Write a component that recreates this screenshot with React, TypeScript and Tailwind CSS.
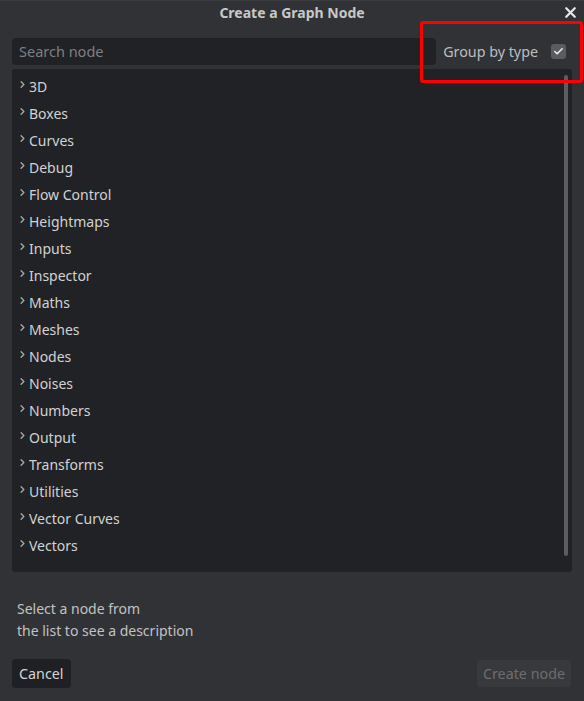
import { Check, ChevronRight, X } from 'lucide-react';

const groups = [
  '3D', 'Boxes', 'Curves', 'Debug', 'Flow Control', 'Heightmaps', 'Inputs', 'Inspector', 'Maths',
  'Meshes', 'Nodes', 'Noises', 'Numbers', 'Output', 'Transforms', 'Utilities', 'Vector Curves', 'Vectors',
];

export default function App() {
  return (
    <div className="relative w-[584px] h-[701px] bg-[#313236] text-[#d6d6d6] text-[14px] overflow-hidden flex flex-col" style={{ fontFamily: '"Noto Sans", sans-serif' }}>
      {/* title bar */}
      <div className="relative h-[26px] flex items-center justify-center border-t border-[#3c3d41]">
        <span className="font-bold text-[#c8c8c8] -mt-[2px]">Create a Graph Node</span>
        <X size={17} strokeWidth={3.2} className="absolute right-[5px] top-[3px] text-[#e6e6e6]" />
      </div>

      <div className="flex items-center pl-[12px] pr-[18px] mt-[12px] h-[27px]">
        <div className="flex-1 h-[27px] rounded-[4px] bg-[#212226] flex items-center px-[7px] text-[#7e7f82] text-[14.5px]">
          Search node
        </div>
        <span className="ml-[7px] text-[#bdbdbd] text-[14.3px]">Group by type</span>
        <div className="ml-[13px] w-[15px] h-[15px] rounded-[3px] bg-[#5b5c60] flex items-center justify-center">
          <Check size={11} strokeWidth={3.5} className="text-[#ececec]" />
        </div>
      </div>

      <div className="mx-[12px] mt-[4px] h-[503px] rounded-[3px] bg-[#212226] flex">
        <div className="flex-1 pt-[4px] pl-[5px]">
          {groups.map((g) => (
            <div key={g} className="h-[27px] flex items-center">
              <ChevronRight size={11} strokeWidth={3} className="text-[#a6a6a6] -mt-[4px]" />
              <span className="ml-[1px] text-[#d2d2d2]">{g}</span>
            </div>
          ))}
        </div>
        <div className="w-[4px] mr-[4px] mt-[6px] mb-[16px] rounded-[2px] bg-[#5c5d61]" />
      </div>

      <div className="pl-[17px] mt-[26px] leading-[22px] text-[#c2c2c2]">
        <div>Select a node from</div>
        <div>the list to see a description</div>
      </div>

      <div className="flex justify-between pl-[12px] pr-[13px] mt-[17px]">
        <div className="h-[29px] px-[7px] rounded-[4px] bg-[#1f2023] flex items-center text-[#d4d4d4] text-[14.3px]">Cancel</div>
        <div className="mt-[1px] h-[27px] px-[6px] rounded-[4px] bg-[#38393d] flex items-center text-[#6c6d70] text-[14.3px]">Create node</div>
      </div>

      <div className="absolute left-[420px] top-[21px] w-[163px] h-[62px] border-[3px] border-[#ff0000] rounded-[3px]" />
    </div>
  );
}
